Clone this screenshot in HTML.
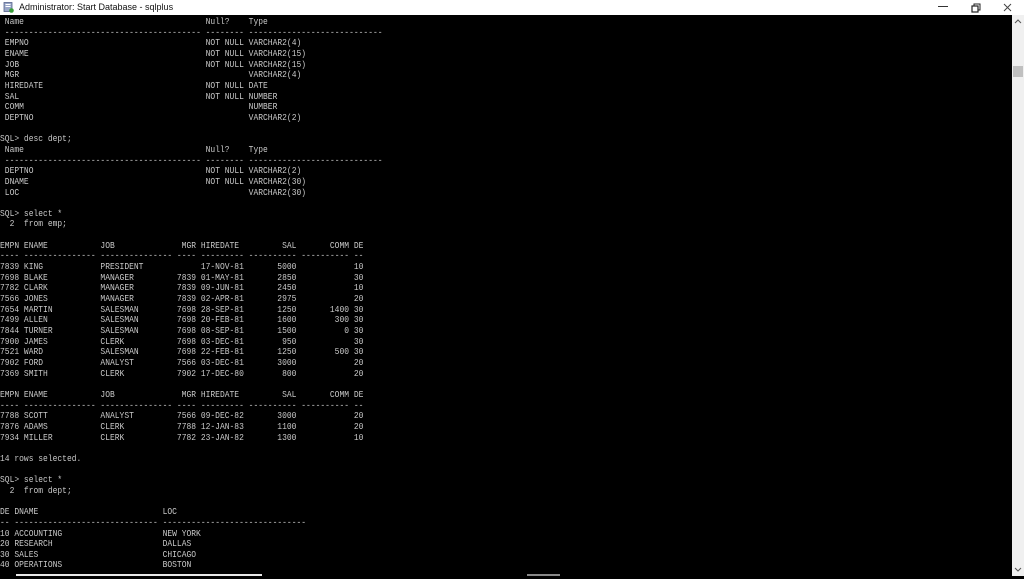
<!DOCTYPE html>
<html><head><meta charset="utf-8">
<style>
*{margin:0;padding:0;box-sizing:border-box}
html,body{width:1024px;height:576px;overflow:hidden;background:#000}
#title{position:absolute;left:0;top:0;width:1024px;height:15px;background:#fff;font:9px "Liberation Sans",sans-serif;color:#111}
#title .t{position:absolute;left:19px;top:1.5px}
#con{position:absolute;left:0;top:18px;width:1012px;height:561px;font-family:"Liberation Mono",monospace;font-size:7.97px;color:#c8c8c8}
.l{height:10.67px;line-height:10.67px;white-space:pre;transform:scaleY(1.2);transform-origin:50% 50%}
.l span{display:inline-block;white-space:pre}
.w5{width:5ch}.w16{width:16ch}.w10{width:10ch}
.m4{width:4ch;margin-right:1ch;text-align:right}
.m10{width:10ch;margin-right:1ch;text-align:right}
.r2{width:2ch;text-align:right}
.w43{width:43ch}.w9{width:9ch}.w34{width:34ch}.w3{width:3ch}.w31{width:31ch}
#vs{position:absolute;left:1012px;top:15px;width:12px;height:561px;background:#f0f0f0}
#thumb{position:absolute;left:1013px;top:66px;width:10px;height:11px;background:#c0c0c0}
</style></head><body>
<div id="title">
<svg style="position:absolute;left:3px;top:2px" width="11" height="11" viewBox="0 0 11 11"><rect x="1" y="0.5" width="8" height="9" fill="#9aa7c8" stroke="#55628a" stroke-width="0.8"/><rect x="2.5" y="2" width="5" height="1" fill="#fff"/><rect x="2.5" y="4" width="5" height="1" fill="#fff"/><circle cx="8.5" cy="8.5" r="2.3" fill="#3a9d3a"/></svg>
<span class="t">Administrator: Start Database - sqlplus</span>
<svg style="position:absolute;left:938px;top:6px" width="10" height="2"><rect width="10" height="1" fill="#333"/></svg>
<svg style="position:absolute;left:971px;top:3px" width="10" height="10" viewBox="0 0 10 10"><rect x="1" y="3" width="6" height="6" fill="none" stroke="#222" stroke-width="1.2"/><path d="M3 3V1H9V7H7" fill="none" stroke="#222" stroke-width="1"/></svg>
<svg style="position:absolute;left:1003px;top:3px" width="9" height="9" viewBox="0 0 9 9"><path d="M1 1L8 8M8 1L1 8" stroke="#444" stroke-width="1"/></svg>
</div>
<div id="con">
<div class="l"><span class="w43"> Name</span><span class="w9">Null?</span>Type</div>
<div class="l"> ----------------------------------------- -------- ----------------------------</div>
<div class="l"><span class="w43"> EMPNO</span>NOT NULL VARCHAR2(4)</div>
<div class="l"><span class="w43"> ENAME</span>NOT NULL VARCHAR2(15)</div>
<div class="l"><span class="w43"> JOB</span>NOT NULL VARCHAR2(15)</div>
<div class="l"><span class="w43"> MGR</span><span class="w9"></span>VARCHAR2(4)</div>
<div class="l"><span class="w43"> HIREDATE</span>NOT NULL DATE</div>
<div class="l"><span class="w43"> SAL</span>NOT NULL NUMBER</div>
<div class="l"><span class="w43"> COMM</span><span class="w9"></span>NUMBER</div>
<div class="l"><span class="w43"> DEPTNO</span><span class="w9"></span>VARCHAR2(2)</div>
<div class="l"> </div>
<div class="l">SQL&gt; desc dept;</div>
<div class="l"><span class="w43"> Name</span><span class="w9">Null?</span>Type</div>
<div class="l"> ----------------------------------------- -------- ----------------------------</div>
<div class="l"><span class="w43"> DEPTNO</span>NOT NULL VARCHAR2(2)</div>
<div class="l"><span class="w43"> DNAME</span>NOT NULL VARCHAR2(30)</div>
<div class="l"><span class="w43"> LOC</span><span class="w9"></span>VARCHAR2(30)</div>
<div class="l"> </div>
<div class="l">SQL&gt; select *</div>
<div class="l">  2  from emp;</div>
<div class="l"> </div>
<div class="l"><span class="w5">EMPN</span><span class="w16">ENAME</span><span class="w16">JOB</span><span class="m4">MGR</span><span class="w10">HIREDATE</span><span class="m10">SAL</span><span class="m10">COMM</span><span class="r2">DE</span></div>
<div class="l">---- --------------- --------------- ---- --------- ---------- ---------- --</div>
<div class="l"><span class="w5">7839</span><span class="w16">KING</span><span class="w16">PRESIDENT</span><span class="m4"></span><span class="w10">17-NOV-81</span><span class="m10">5000</span><span class="m10"></span><span class="r2">10</span></div>
<div class="l"><span class="w5">7698</span><span class="w16">BLAKE</span><span class="w16">MANAGER</span><span class="m4">7839</span><span class="w10">01-MAY-81</span><span class="m10">2850</span><span class="m10"></span><span class="r2">30</span></div>
<div class="l"><span class="w5">7782</span><span class="w16">CLARK</span><span class="w16">MANAGER</span><span class="m4">7839</span><span class="w10">09-JUN-81</span><span class="m10">2450</span><span class="m10"></span><span class="r2">10</span></div>
<div class="l"><span class="w5">7566</span><span class="w16">JONES</span><span class="w16">MANAGER</span><span class="m4">7839</span><span class="w10">02-APR-81</span><span class="m10">2975</span><span class="m10"></span><span class="r2">20</span></div>
<div class="l"><span class="w5">7654</span><span class="w16">MARTIN</span><span class="w16">SALESMAN</span><span class="m4">7698</span><span class="w10">28-SEP-81</span><span class="m10">1250</span><span class="m10">1400</span><span class="r2">30</span></div>
<div class="l"><span class="w5">7499</span><span class="w16">ALLEN</span><span class="w16">SALESMAN</span><span class="m4">7698</span><span class="w10">20-FEB-81</span><span class="m10">1600</span><span class="m10">300</span><span class="r2">30</span></div>
<div class="l"><span class="w5">7844</span><span class="w16">TURNER</span><span class="w16">SALESMAN</span><span class="m4">7698</span><span class="w10">08-SEP-81</span><span class="m10">1500</span><span class="m10">0</span><span class="r2">30</span></div>
<div class="l"><span class="w5">7900</span><span class="w16">JAMES</span><span class="w16">CLERK</span><span class="m4">7698</span><span class="w10">03-DEC-81</span><span class="m10">950</span><span class="m10"></span><span class="r2">30</span></div>
<div class="l"><span class="w5">7521</span><span class="w16">WARD</span><span class="w16">SALESMAN</span><span class="m4">7698</span><span class="w10">22-FEB-81</span><span class="m10">1250</span><span class="m10">500</span><span class="r2">30</span></div>
<div class="l"><span class="w5">7902</span><span class="w16">FORD</span><span class="w16">ANALYST</span><span class="m4">7566</span><span class="w10">03-DEC-81</span><span class="m10">3000</span><span class="m10"></span><span class="r2">20</span></div>
<div class="l"><span class="w5">7369</span><span class="w16">SMITH</span><span class="w16">CLERK</span><span class="m4">7902</span><span class="w10">17-DEC-80</span><span class="m10">800</span><span class="m10"></span><span class="r2">20</span></div>
<div class="l"> </div>
<div class="l"><span class="w5">EMPN</span><span class="w16">ENAME</span><span class="w16">JOB</span><span class="m4">MGR</span><span class="w10">HIREDATE</span><span class="m10">SAL</span><span class="m10">COMM</span><span class="r2">DE</span></div>
<div class="l">---- --------------- --------------- ---- --------- ---------- ---------- --</div>
<div class="l"><span class="w5">7788</span><span class="w16">SCOTT</span><span class="w16">ANALYST</span><span class="m4">7566</span><span class="w10">09-DEC-82</span><span class="m10">3000</span><span class="m10"></span><span class="r2">20</span></div>
<div class="l"><span class="w5">7876</span><span class="w16">ADAMS</span><span class="w16">CLERK</span><span class="m4">7788</span><span class="w10">12-JAN-83</span><span class="m10">1100</span><span class="m10"></span><span class="r2">20</span></div>
<div class="l"><span class="w5">7934</span><span class="w16">MILLER</span><span class="w16">CLERK</span><span class="m4">7782</span><span class="w10">23-JAN-82</span><span class="m10">1300</span><span class="m10"></span><span class="r2">10</span></div>
<div class="l"> </div>
<div class="l">14 rows selected.</div>
<div class="l"> </div>
<div class="l">SQL&gt; select *</div>
<div class="l">  2  from dept;</div>
<div class="l"> </div>
<div class="l"><span class="w3">DE</span><span class="w31">DNAME</span>LOC</div>
<div class="l">-- ------------------------------ ------------------------------</div>
<div class="l"><span class="w3">10</span><span class="w31">ACCOUNTING</span>NEW YORK</div>
<div class="l"><span class="w3">20</span><span class="w31">RESEARCH</span>DALLAS</div>
<div class="l"><span class="w3">30</span><span class="w31">SALES</span>CHICAGO</div>
<div class="l"><span class="w3">40</span><span class="w31">OPERATIONS</span>BOSTON</div>
</div>
<div id="vs"></div>
<svg style="position:absolute;left:1014px;top:19px" width="8" height="5" viewBox="0 0 8 5"><path d="M1 4L4 1L7 4" fill="none" stroke="#555" stroke-width="1"/></svg>
<svg style="position:absolute;left:1014px;top:567px" width="8" height="5" viewBox="0 0 8 5"><path d="M1 1L4 4L7 1" fill="none" stroke="#555" stroke-width="1"/></svg>
<div id="thumb"></div>
<div style="position:absolute;left:16px;top:574px;width:246px;height:2px;background:#e8e8e8"></div>
<div style="position:absolute;left:527px;top:574px;width:33px;height:2px;background:#888"></div>
</body></html>
